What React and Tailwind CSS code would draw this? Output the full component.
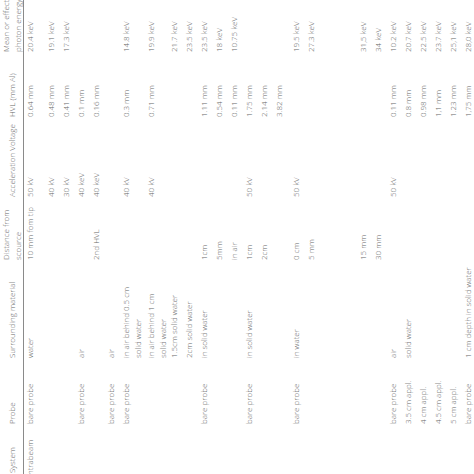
import React from "react";

const cols = "grid grid-cols-[53px_66px_98px_63px_80px_65px_115px]";

const head = [
  ["System"],
  ["Probe"],
  ["Surrounding material"],
  ["Distance from", "scource"],
  ["Acceleration Voltage"],
  ["HVL (mm Al)"],
  ["Mean or effective", "photon energy"],
];

const rows = [
  { h: "h-[21px]", c: ["Intrabeam", "bare probe", "water", "10 mm fom tip", "50 kV", "0.64 mm", "20.4 keV"] },
  { h: "h-[15px]", c: ["", "", "", "", "40 kV", "0.48 mm", "19.1 keV"] },
  { h: "h-[15px]", c: ["", "", "", "", "30 kV", "0.41 mm", "17.3 keV"] },
  { h: "h-[15px]", c: ["", "bare probe", "air", "", "40 keV", "0.1 mm", ""] },
  { h: "h-[15px]", c: ["", "", "", "2nd HVL", "40 keV", "0.16 mm", ""] },
  { h: "h-[15px]", c: ["", "bare probe", "air", "", "", "", ""] },
  { h: "h-[25px]", c: ["", "bare probe", ["in air behind 0.5 cm", "solid water"], "", "40 kV", "0.3 mm", "14.8 keV"] },
  { h: "h-[23px]", c: ["", "", ["in air behind 1 cm", "solid water"], "", "40 kV", "0.71 mm", "19.9 keV"] },
  { h: "h-[15px]", c: ["", "", "1.5cm solid water", "", "", "", "21.7 keV"] },
  { h: "h-[15px]", c: ["", "", "2cm solid water", "", "", "", "23.5 keV"] },
  { h: "h-[15px]", c: ["", "bare probe", "in solid water", "1cm", "", "1.11 mm", "23.5 keV"] },
  { h: "h-[15px]", c: ["", "", "", "5mm", "", "0.54 mm", "18 keV"] },
  { h: "h-[15px]", c: ["", "", "", "in air", "", "0.11 mm", "10.75 keV"] },
  { h: "h-[15px]", c: ["", "bare probe", "in solid water", "1cm", "50 kV", "1.75 mm", ""] },
  { h: "h-[15px]", c: ["", "", "", "2cm", "", "2.14 mm", ""] },
  { h: "h-[17px]", c: ["", "", "", "", "", "3.82 mm", ""] },
  { h: "h-[15px]", c: ["", "bare probe", "in water", "0 cm", "50 kV", "", "19.5 keV"] },
  { h: "h-[52px]", c: ["", "", "", "5 mm", "", "", "27.3 keV"] },
  { h: "h-[15px]", c: ["", "", "", "15 mm", "", "", "31,5 keV"] },
  { h: "h-[15px]", c: ["", "", "", "30 mm", "", "", "34 keV"] },
  { h: "h-[15px]", c: ["", "bare probe", "air", "", "50 kV", "0.11 mm", "10.2 keV"] },
  { h: "h-[15px]", c: ["", "3.5 cm appl.", "solid water", "", "", "0.8 mm", "20.7 keV"] },
  { h: "h-[15px]", c: ["", "4 cm appl.", "", "", "", "0.98 mm", "22.5 keV"] },
  { h: "h-[15px]", c: ["", "4.5 cm appl.", "", "", "", "1,1 mm", "23.7 keV"] },
  { h: "h-[15px]", c: ["", "5 cm appl.", "", "", "", "1.23 mm", "25,1 keV"] },
  { h: "h-[20px]", c: ["", "bare probe", "1 cm depth in solid water", "", "", "1,75 mm", "28,0 keV"] },
];

function Cell({ v, pad = "pl-[7px]" }) {
  const lines = Array.isArray(v) ? v : [v];
  return (
    <div className={`${pad} leading-[12px] whitespace-nowrap`}>
      {lines.map((l, i) => (
        <div key={i}>{l}</div>
      ))}
    </div>
  );
}

export default function App() {
  return (
    <div className="w-[474px] h-[474px] overflow-hidden bg-white">
      <div
        className="w-[540px] origin-top-left [transform:translateY(484px)_rotate(-90deg)] text-[8px] font-light text-[#666666]"
        style={{ fontFamily: '"Open Sans", "Liberation Sans", sans-serif' }}
      >
        <div className={`${cols} h-[24px] border-b border-[#8a8a8a]`}>
          {head.map((h, i) => (
            <div key={i} className="flex items-center">
              <Cell v={h} pad={i === 0 ? "pl-[11px]" : "pl-[7px]"} />
            </div>
          ))}
        </div>
        {rows.map((r, i) => (
          <div key={i} className={`${cols} ${r.h}`}>
            {r.c.map((v, j) => (
              <Cell key={j} v={v} />
            ))}
          </div>
        ))}
      </div>
    </div>
  );
}
